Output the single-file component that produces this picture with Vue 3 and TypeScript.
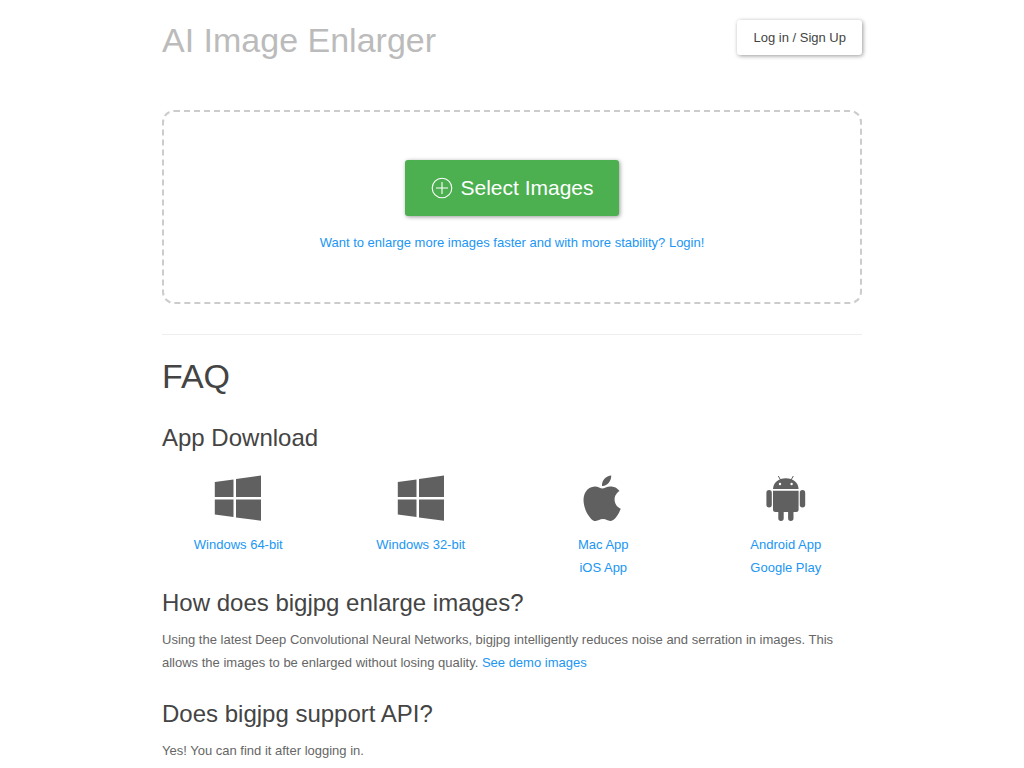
<script setup lang="ts">
interface AppLink {
  label: string
  href: string
}
interface Platform {
  icon: 'windows' | 'apple' | 'android'
  links: AppLink[]
}

const platforms: Platform[] = [
  { icon: 'windows', links: [{ label: 'Windows 64-bit', href: '#win64' }] },
  { icon: 'windows', links: [{ label: 'Windows 32-bit', href: '#win32' }] },
  { icon: 'apple', links: [{ label: 'Mac App', href: '#mac' }, { label: 'iOS App', href: '#ios' }] },
  { icon: 'android', links: [{ label: 'Android App', href: '#android' }, { label: 'Google Play', href: '#play' }] },
]
</script>

<template>
  <div class="page">
    <header class="header">
      <h1 class="title">AI Image Enlarger</h1>
      <button type="button" class="btn login">Log in / Sign Up</button>
    </header>

    <main>
      <section class="drop">
        <button type="button" class="btn select">
          <svg class="plus" viewBox="0 0 22 22" aria-hidden="true">
            <circle cx="11" cy="11" r="9.8" />
            <path d="M11 5v12M5 11h12" />
          </svg>
          <span>Select Images</span>
        </button>
        <a href="#login">Want to enlarge more images faster and with more stability? Login!</a>
      </section>

      <hr class="rule">

      <h2 class="faq">FAQ</h2>

      <h3>App Download</h3>
      <ul class="platforms">
        <li v-for="(platform, i) in platforms" :key="i">
          <svg class="os" viewBox="0 0 48 48" aria-hidden="true">
            <path
              v-if="platform.icon === 'windows'"
              d="M.8 8 19.5 5.4V23H.8zM22 5 47 1.5V23H22zM.8 25.5H19.5V43L.8 40.6zM22 25.5H47V46.8L22 43.4z"
            />
            <path
              v-else-if="platform.icon === 'apple'"
              transform="translate(.3 1.4) scale(1.9)"
              d="M12.152 6.896c-.948 0-2.415-1.078-3.96-1.04-2.04.027-3.91 1.183-4.961 3.014-2.117 3.675-.546 9.103 1.519 12.09 1.013 1.454 2.208 3.09 3.792 3.039 1.52-.065 2.09-.987 3.935-.987 1.831 0 2.35.987 3.96.948 1.637-.026 2.676-1.48 3.676-2.948 1.156-1.688 1.636-3.325 1.662-3.415-.039-.013-3.182-1.221-3.22-4.857-.026-3.04 2.48-4.494 2.597-4.559-1.429-2.09-3.623-2.324-4.39-2.376-2-.156-3.675 1.09-4.61 1.09zM15.53 3.83c.843-1.012 1.4-2.427 1.245-3.83-1.207.052-2.662.805-3.532 1.818-.78.896-1.454 2.338-1.273 3.714 1.338.104 2.715-.688 3.559-1.701"
            />
            <g v-else>
              <path class="antenna" d="M16.3 2l2.4 4.2M31.3 2l-2.4 4.2" />
              <path d="M11 15C11.3 8.500 16.500 4.200 23.800 4.200S36.300 8.500 36.600 15z" />
              <path d="M11 16.700H36.600V35.500a2.500 2.500 0 0 1-2.500 2.500H31.500v6.300a2.700 2.700 0 0 1-5.400 0V38H21.700v6.300a2.700 2.700 0 0 1-5.400 0V38H13.500a2.500 2.500 0 0 1-2.500-2.500z" />
              <rect x="4.4" y="16" width="5.4" height="17.400" rx="2.700" />
              <rect x="37.800" y="16" width="5.400" height="17.400" rx="2.700" />
              <circle class="eye" cx="18" cy="10" r="1.200" />
              <circle class="eye" cx="29.600" cy="10" r="1.200" />
            </g>
          </svg>
          <a v-for="link in platform.links" :key="link.label" :href="link.href">{{ link.label }}</a>
        </li>
      </ul>

      <h3>How does bigjpg enlarge images?</h3>
      <p class="answer">
        Using the latest Deep Convolutional Neural Networks, bigjpg intelligently reduces noise and serration in images.
        This allows the images to be enlarged without losing quality.
        <a href="#demo">See demo images</a>
      </p>

      <h3>Does bigjpg support API?</h3>
      <p class="answer">Yes! You can find it after logging in.</p>
    </main>
  </div>
</template>

<style>
body {
  background: #fff;
}
</style>

<style scoped>
.page {
  box-sizing: border-box;
  max-width: 732px;
  margin: 0 auto;
  padding: 20px 16px 0;
  color: #666;
  font: 13px/23px "Liberation Sans", Arial, sans-serif;
}
.header {
  display: flex;
  align-items: flex-start;
  justify-content: space-between;
  gap: 16px;
  margin-bottom: 50px;
}
h1,
h2,
h3,
p,
ul {
  margin: 0;
  padding: 0;
  font-weight: 400;
}
.title {
  color: #bbb;
  font-size: 34px;
  line-height: 40px;
}
a {
  color: #2196f3;
  text-decoration: none;
}
.btn {
  display: flex;
  align-items: center;
  justify-content: center;
  border: 0;
  border-radius: 3px;
  box-shadow: 1px 1px 4px rgba(0, 0, 0, 0.4);
  font-family: inherit;
  cursor: pointer;
}
.login {
  padding: 6px 16px;
  background: #fff;
  color: #444;
  font-size: 13px;
  line-height: 23px;
}
.drop {
  display: flex;
  flex-direction: column;
  align-items: center;
  gap: 15px;
  padding: 48px 16px;
  border: 2px dashed #ccc;
  border-radius: 12px;
}
.select {
  gap: 7px;
  padding: 12px 25px 12px 26px;
  background: #4caf50;
  color: #fff;
  font-size: 21px;
  line-height: 32px;
}
.plus {
  width: 22px;
  height: 22px;
  fill: none;
  stroke: #fff;
  stroke-width: 1.1;
}
.rule {
  height: 1px;
  margin: 30px 0 20px;
  border: 0;
  background: #eee;
}
h2,
h3 {
  color: #444;
}
.faq {
  margin-bottom: 23px;
  font-size: 34px;
  line-height: 42px;
}
h3 {
  font-size: 24px;
  line-height: 36px;
}
.platforms {
  display: grid;
  grid-template-columns: repeat(4, 1fr);
  margin: 18px -15px 6px;
  list-style: none;
}
.platforms li {
  display: flex;
  flex-direction: column;
  align-items: center;
}
.os {
  width: 48px;
  height: 48px;
  margin-bottom: 11px;
  fill: #606060;
}
.antenna {
  fill: none;
  stroke: #606060;
  stroke-width: 1;
}
.eye {
  fill: #fff;
}
.answer {
  margin: 7px 0 22px;
}
.answer:last-child {
  margin-bottom: 0;
}
</style>
